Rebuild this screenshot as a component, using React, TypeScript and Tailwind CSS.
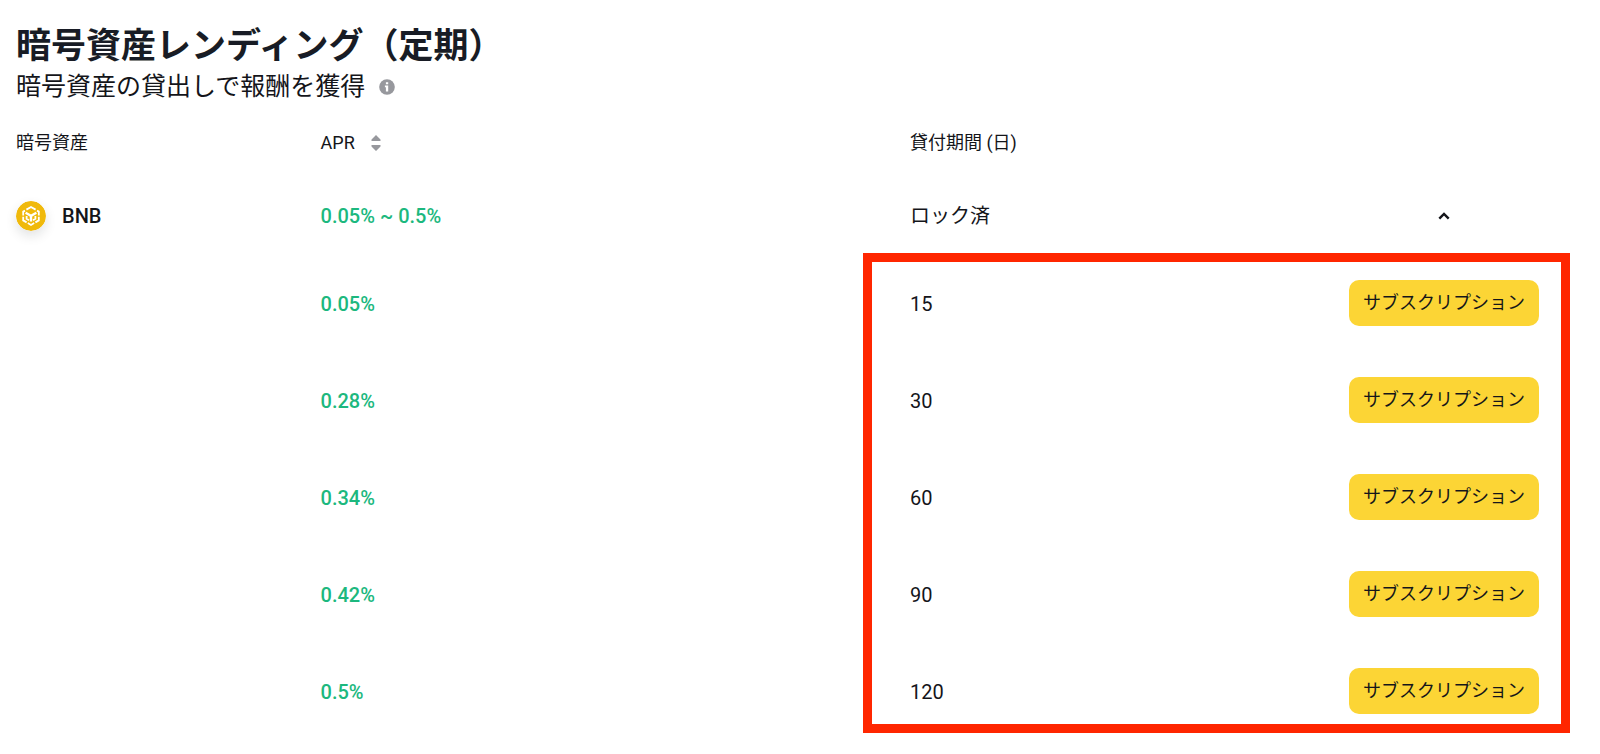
import { useState } from 'react';

type Product = {
    apr: string;
    days: number;
};

const products: Product[] = [
    { apr: '0.05%', days: 15 },
    { apr: '0.28%', days: 30 },
    { apr: '0.34%', days: 60 },
    { apr: '0.42%', days: 90 },
    { apr: '0.5%', days: 120 },
];

function BnbIcon() {
    return (
        <svg
            viewBox="0 0 30 30"
            className="h-[30px] w-[30px] rounded-full shadow-[0_5px_12px_rgba(20,21,26,0.12)]"
            aria-hidden="true"
        >
            <circle cx="15" cy="15" r="15" fill="#F0B90B" />
            <g fill="none" stroke="#fff" strokeWidth="1.8">
                <path d="M10.4 8.6 15 6l4.6 2.6M21 9.6l1.8 1v3.8M22.8 15.8v3.6l-3.4 2M18.2 22 15 23.9 11.8 22M10.6 21.4l-3.4-2v-3.6M7.2 14.4v-3.8l1.8-1" />
                <path d="M15 14.8v5.6" strokeWidth="2.4" />
                <path d="m9.6 11.8 5.4 3 5.4-3" strokeWidth="2.4" />
                <path d="M10.6 15v2.8l2.4 1.4M19.4 15v2.8L17 19.2" />
            </g>
        </svg>
    );
}

function InfoIcon() {
    return (
        <svg viewBox="0 0 16 16" className="h-4 w-4" aria-hidden="true">
            <circle cx="8" cy="8" r="7.8" fill="#97989D" />
            <path
                d="M6.9 3.2h2.3v2.1H6.9zM5.9 6.6h3.3v6H6.9V8.3h-1z"
                fill="#fff"
            />
        </svg>
    );
}

function SortIcon() {
    return (
        <svg viewBox="0 0 10 18" className="h-[18px] w-[10px]" aria-hidden="true">
            <path d="M5 1 9.5 5.5V7h-9V5.5zM5 17l4.5-4.5V11h-9v1.5z" fill="#97989D" />
        </svg>
    );
}

function ChevronIcon({ open }: { open: boolean }) {
    return (
        <svg
            viewBox="0 0 12 8"
            className={open ? 'h-2 w-3' : 'h-2 w-3 rotate-180'}
            aria-hidden="true"
        >
            <path
                d="M1.3 6.7 6 2l4.7 4.7"
                fill="none"
                stroke="#14151A"
                strokeWidth="2.4"
            />
        </svg>
    );
}

export default function App() {
    const [open, setOpen] = useState(true);
    const last = products.length - 1;

    return (
        <main className="min-h-screen bg-white pt-[26px] pr-[30px] pb-5 pl-4 font-['Roboto','Noto_Sans_CJK_JP',sans-serif] text-[#14151A]">
            {/* Heading */}
            <h1 className="text-[35px] leading-[42px] font-bold text-[#181C25]">
                暗号資産レンディング（定期）
            </h1>
            <div className="flex items-center gap-[14px]">
                <p className="text-[25px] leading-[38px]">
                    暗号資産の貸出しで報酬を獲得
                </p>
                <button type="button" aria-label="詳細">
                    <InfoIcon />
                </button>
            </div>

            {/* Lending products */}
            <table className="w-full table-fixed border-separate border-spacing-0 text-left">
                <colgroup>
                    <col className="w-[19.6%]" />
                    <col className="w-[34.9%]" />
                    <col />
                    <col className="w-[221px]" />
                </colgroup>
                <thead className="text-[18px] leading-6">
                    <tr className="h-[73px]">
                        <th className="p-0 font-normal">暗号資産</th>
                        <th className="p-0 font-normal">
                            <button
                                type="button"
                                className="flex items-center gap-4"
                            >
                                APR
                                <SortIcon />
                            </button>
                        </th>
                        <th className="p-0 pl-[47px] font-normal">
                            貸付期間 (日)
                        </th>
                        <td></td>
                    </tr>
                </thead>
                <tbody className="text-xl leading-7">
                    <tr className="h-[74px]">
                        <td className="p-0">
                            <div className="flex items-center gap-4 font-medium">
                                <BnbIcon />
                                BNB
                            </div>
                        </td>
                        <td className="p-0 font-medium text-[#1CB87E]">
                            0.05% ~ 0.5%
                        </td>
                        <td className="p-0 pl-[47px]">ロック済</td>
                        <td className="p-0 pr-[31px]">
                            <button
                                type="button"
                                aria-label="BNB"
                                aria-expanded={open}
                                onClick={() => setOpen(!open)}
                                className="flex w-full justify-center py-3"
                            >
                                <ChevronIcon open={open} />
                            </button>
                        </td>
                    </tr>
                    {open &&
                        products.map((item, i) => (
                            <tr key={item.days} className="align-top">
                                <td></td>
                                <td className="p-0 pt-[37px] font-medium text-[#1CB87E]">
                                    {item.apr}
                                </td>
                                <td
                                    className={`border-l-[9px] border-[#FF2600] pl-[38px] ${i === 0 ? 'border-t-[9px] pt-7' : 'pt-[37px]'} ${i === last ? 'border-b-[9px]' : ''}`}
                                >
                                    {item.days}
                                </td>
                                <td
                                    className={`border-r-[9px] border-[#FF2600] pr-[22px] ${i === 0 ? 'border-t-[9px] pt-[18px]' : 'pt-[27px]'} ${i === last ? 'border-b-[9px] pb-[10px]' : 'pb-6'}`}
                                >
                                    <button
                                        type="button"
                                        className="block h-[46px] w-full rounded-[10px] bg-[#FCD535] text-[18px] leading-6"
                                    >
                                        サブスクリプション
                                    </button>
                                </td>
                            </tr>
                        ))}
                </tbody>
            </table>
        </main>
    );
}
